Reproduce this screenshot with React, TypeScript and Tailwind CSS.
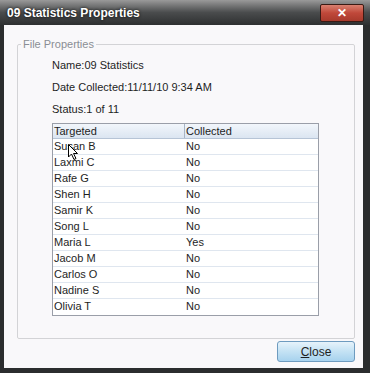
import React from "react";

const ROWS: [string, string][] = [
  ["Susan B", "No"],
  ["Laxmi C", "No"],
  ["Rafe G", "No"],
  ["Shen H", "No"],
  ["Samir K", "No"],
  ["Song L", "No"],
  ["Maria L", "Yes"],
  ["Jacob M", "No"],
  ["Carlos O", "No"],
  ["Nadine S", "No"],
  ["Olivia T", "No"],
];

function Cursor() {
  return (
    <svg className="absolute left-[15px] top-[5px]" width="11" height="17" viewBox="0 0 11 17">
      <path d="M0.5 0.5 L0.5 13 L3.5 10 L6 15.5 L8 14.5 L5.5 9.5 L9.5 9.5 Z" fill="#fff" stroke="#000" strokeWidth="1" />
    </svg>
  );
}

export default function App() {
  return (
    <div className="flex h-[373px] w-[370px] flex-col bg-[#2b2d2e] font-['Liberation_Sans',Arial,sans-serif]">
      {/* title bar */}
      <div className="flex h-[25px] shrink-0 items-center justify-between bg-gradient-to-b from-[#9a9a9a] via-[#4a4c4d] to-[#2e3031] pl-[7px] pr-[6px]">
        <span className="text-[12px] font-bold text-white [text-shadow:0_0_3px_#000]">09 Statistics Properties</span>
        <div className="flex h-[18px] w-[44px] items-center justify-center rounded-[2px] border border-[#3a1a14] bg-gradient-to-b from-[#d98070] via-[#c0483a] to-[#a83a2c]">
          <span className="text-[12px] font-bold leading-none text-white">✕</span>
        </div>
      </div>

      {/* client */}
      <div className="mb-[5px] ml-[4px] mr-[7px] flex flex-1 flex-col bg-[#f9f8fa] pl-[13px] pr-[8px] pt-[11px]">
        <fieldset className="h-[303px] rounded-[2px] border border-[#d3d3d6] px-0 pb-0">
          <legend className="ml-[3px] px-[2px] text-[11px] text-[#8a8e94]">File Properties</legend>
          <div className="flex flex-col pl-[34px] text-[11px] text-[#1e1e1e]">
            <p className="mt-[5px] leading-[14px]">Name:09 Statistics</p>
            <p className="mt-[8px] leading-[14px]">Date Collected:11/11/10 9:34 AM</p>
            <p className="mt-[8px] leading-[14px]">Status:1 of 11</p>
            <div className="mt-[7px] w-[267px] border border-[#9a9ea8] bg-white">
              <div className="flex h-[15px] border-b border-[#b6c4d6] bg-gradient-to-b from-[#f2f6fb] to-[#dbe5f1] leading-[15px]">
                <div className="w-[132px] border-r border-[#a8b4c4] pl-[1px]">Targeted</div>
                <div className="pl-[1px]">Collected</div>
              </div>
              {ROWS.map(([name, val], i) => (
                <div
                  key={name}
                  className={
                    "relative flex h-[16px] leading-[15px] " +
                    (i < ROWS.length - 1 ? "border-b border-[#dfe6ef]" : "")
                  }
                >
                  <div className="w-[133px] pl-[1px]">{name}</div>
                  <div>{val}</div>
                  {i === 0 && <Cursor />}
                </div>
              ))}
            </div>
          </div>
        </fieldset>
        <div className="flex justify-end pr-[0px] pt-[2px]">
          <button className="h-[21px] w-[78px] rounded-[3px] border border-[#6e9bbf] bg-gradient-to-b from-[#e6f3fb] via-[#c4e2f4] to-[#a7d2ee] text-[12px] text-[#1e1e1e]">
            <span className="underline">C</span>lose
          </button>
        </div>
      </div>
    </div>
  );
}
